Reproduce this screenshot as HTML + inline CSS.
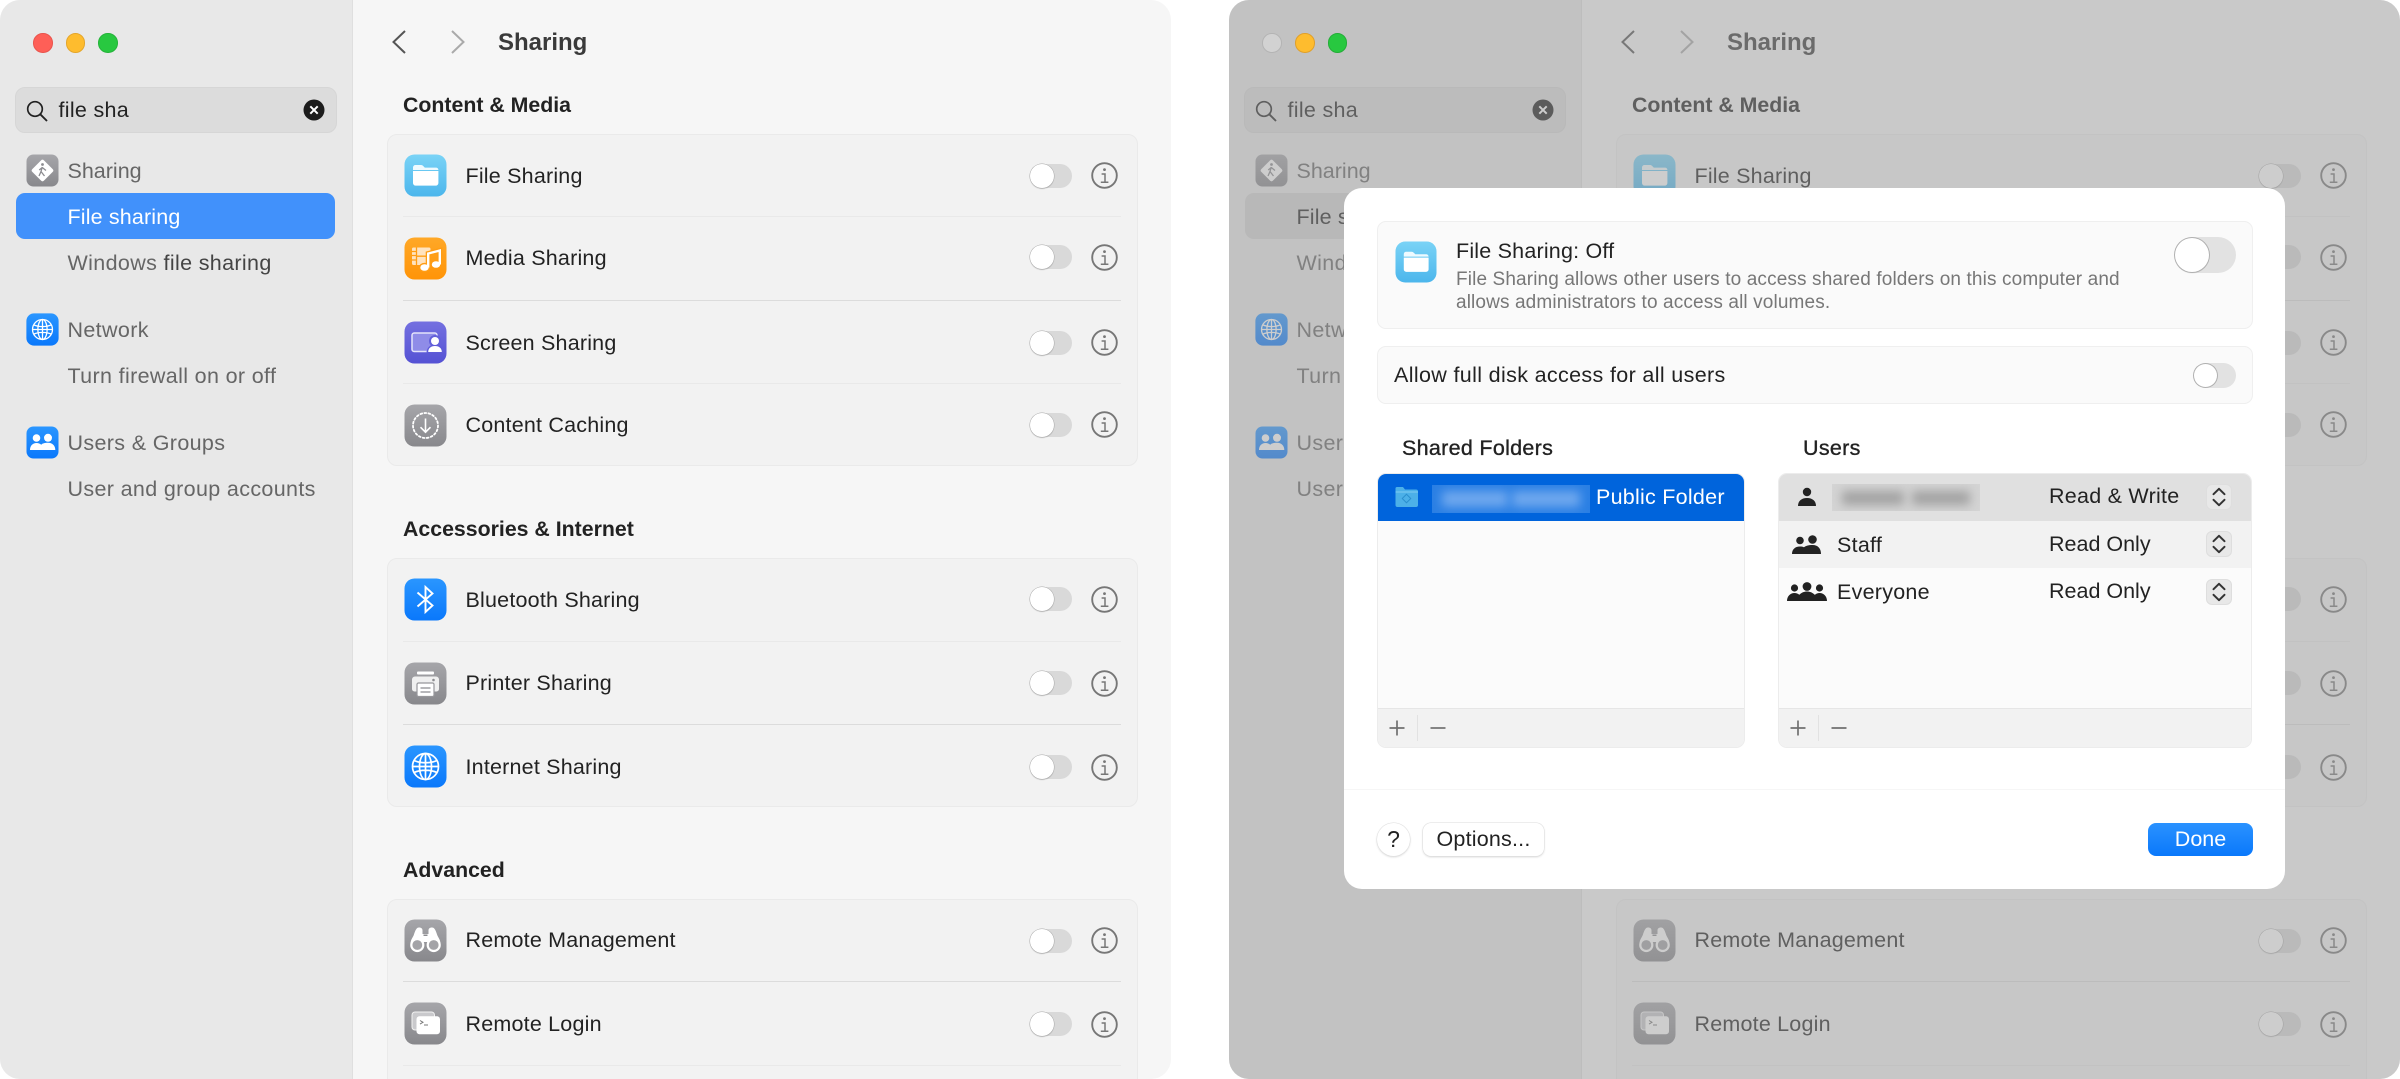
<!DOCTYPE html>
<html><head><meta charset="utf-8"><title>Sharing</title>
<style>
*{box-sizing:border-box}
html,body{margin:0;padding:0;background:#fff}
body{width:2400px;height:1079px;position:relative;overflow:hidden;font-family:"Liberation Sans",sans-serif;color:#222}
.win{position:absolute;top:0;width:1171px;height:1079px;overflow:hidden;border-radius:20px;background:#f6f6f6}
.side{position:absolute;left:0;top:0;width:353px;height:1079px;background:#e8e8e8;border-right:1px solid #dfdfdf}
.t{position:absolute;white-space:nowrap;line-height:30px;height:30px;font-size:21.5px}
.r{left:465.5px;letter-spacing:.2px}
.m{letter-spacing:.25px}
.g{color:#666;letter-spacing:.35px}
.h{font-weight:700;font-size:21.3px;color:#222}
.dot{position:absolute;top:33px;width:19.5px;height:19.5px;border-radius:50%}
.search{position:absolute;left:15px;top:87px;width:322px;height:46px;background:#dcdcdc;border:1px solid #d6d6d6;border-radius:10px}
.sel{position:absolute;left:16px;top:193px;width:319px;height:46px;border-radius:9px;background:#4191fb}
.si{position:absolute;left:26px;width:33px;height:33px}
.panel{position:absolute;left:387px;width:751px;background:#f2f2f2;border:1px solid #eaeaea;border-radius:10px}
.sep{position:absolute;left:403px;width:718px;height:1px;background:#e9e9e9}
.sep.d{background:#dcdcdc}
.ic{position:absolute;left:404px;width:43px;height:43px}
.tg{position:absolute;left:1030px;width:42px;height:24px;border-radius:12px;background:#d9d9d9}
.tg:before{content:"";position:absolute;left:0;top:0;width:24px;height:24px;border-radius:50%;background:#fff;box-shadow:0 0 0 .5px #a8a8a8,0 1px 1px rgba(0,0,0,.2)}
.inf{position:absolute;left:1091px;width:27px;height:27px}
.veil{position:absolute;left:0;top:0;width:1171px;height:1079px;background:rgba(156,156,156,.5)}
.modal{position:absolute;left:1344px;top:188px;width:941px;height:701px;background:#fff;border-radius:18px}
.box{position:absolute;background:#fafafa;border:1px solid #efefef;border-radius:9px}
.list{position:absolute;top:473px;height:275px;background:#fbfbfb;border:1px solid #ececec;border-radius:9px;overflow:hidden}
.foot{position:absolute;left:0;right:0;bottom:0;height:39px;background:#f2f2f2;border-top:1px solid #e6e6e6}
.vd{position:absolute;left:39px;top:6px;width:1px;height:26px;background:#e2e2e2}
.pm{position:absolute;top:0;width:20px;height:38px}
.st{position:absolute;left:2206px;width:26px;height:26px;border-radius:6px;background:#e8e8e8;border:1px solid #dedede}
</style></head><body>
<svg width="0" height="0" style="position:absolute">
<defs>
<linearGradient id="gBlue" x1="0" y1="0" x2="0" y2="1"><stop offset="0" stop-color="#2a96ff"/><stop offset="1" stop-color="#0a78fb"/></linearGradient>
<linearGradient id="gGray" x1="0" y1="0" x2="0" y2="1"><stop offset="0" stop-color="#a6a6aa"/><stop offset="1" stop-color="#88888c"/></linearGradient>
<linearGradient id="gFold" x1="0" y1="0" x2="0" y2="1"><stop offset="0" stop-color="#7ad3f6"/><stop offset="1" stop-color="#4cb6ec"/></linearGradient>
<linearGradient id="gOr" x1="0" y1="0" x2="0" y2="1"><stop offset="0" stop-color="#ffa827"/><stop offset="1" stop-color="#ff9408"/></linearGradient>
<linearGradient id="gPu" x1="0" y1="0" x2="0" y2="1"><stop offset="0" stop-color="#7470e0"/><stop offset="1" stop-color="#5552d4"/></linearGradient>
</defs>
<symbol id="info" viewBox="0 0 27 27"><circle cx="13.5" cy="13.5" r="12.3" fill="none" stroke="#777" stroke-width="1.9"/><circle cx="13.5" cy="7.6" r="1.4" fill="#777"/><path d="M10.6 12h3.4v8M9.8 20.3h7.6" fill="none" stroke="#777" stroke-width="1.5"/></symbol>
<symbol id="folder" viewBox="0 0 43 43"><rect x=".5" y=".5" width="42" height="42" rx="10" fill="url(#gFold)"/><path d="M9 15V13.4A2.4 2.4 0 0 1 11.4 11H17c1 0 1.6.4 2.2 1l1.6 1.6H32A2.4 2.4 0 0 1 34.4 16H9z" fill="#eefaff"/><path d="M9 17H34.4V29A2.6 2.6 0 0 1 31.8 31.6H11.6A2.6 2.6 0 0 1 9 29z" fill="#fff"/></symbol>
<symbol id="media" viewBox="0 0 43 43"><rect x=".5" y=".5" width="42" height="42" rx="10" fill="url(#gOr)"/><rect x="8" y="10.5" width="18.500" height="17.500" rx="1.500" fill="#ffe3bf"/><path d="M12.500 10.500V28M8 14.500h4.500M8 18.500h4.500M8 23h4.500M12.500 19.200H26.500" stroke="#ff9d14" stroke-width="1.300"/><g fill="none" stroke="#ff9d14" stroke-width="5"><path d="M24.200 30V16.500L35.800 13.500V27"/></g><ellipse cx="20.500" cy="30.500" rx="5.500" ry="4.700" fill="#ff9d14"/><path d="M24.200 30.500V16.500L35.800 13.500V27.500" fill="none" stroke="#fff" stroke-width="2.400"/><ellipse cx="20.500" cy="30.500" rx="4.200" ry="3.300" fill="#fff"/><ellipse cx="32" cy="27.500" rx="4.200" ry="3.300" fill="#fff"/></symbol>
<symbol id="screen" viewBox="0 0 43 43"><rect x=".5" y=".5" width="42" height="42" rx="10" fill="url(#gPu)"/><rect x="8" y="12" width="25" height="18.500" rx="2.200" fill="#8f8ce8" stroke="#e4e3fa" stroke-width="1.500"/><circle cx="31" cy="20" r="6" fill="#6360da"/><path d="M22.500 32c0-5 3.500-8.500 8.500-8.500s8.500 3.500 8.500 8.500z" fill="#5f5cd8"/><circle cx="31" cy="20" r="4" fill="#fff"/><path d="M24.200 31c0-3.800 2.800-6 6.800-6s6.800 2.200 6.800 6z" fill="#fff"/></symbol>
<symbol id="cache" viewBox="0 0 43 43"><rect x=".5" y=".5" width="42" height="42" rx="10" fill="url(#gGray)"/><circle cx="21.500" cy="21.500" r="12.500" fill="none" stroke="#fff" stroke-width="1.800" stroke-dasharray="1.800 2.300" stroke-linecap="round"/><path d="M21.500 14.500V28M16.500 23.200l5 5 5-5" fill="none" stroke="#fff" stroke-width="1.600"/></symbol>
<symbol id="bt" viewBox="0 0 43 43"><rect x=".5" y=".5" width="42" height="42" rx="10" fill="url(#gBlue)"/><path d="M13.500 14.500L28.500 27.500 21.500 34V9L28.500 15.500 13.500 28.500" fill="none" stroke="#fff" stroke-width="1.900"/></symbol>
<symbol id="printer" viewBox="0 0 43 43"><rect x=".5" y=".5" width="42" height="42" rx="10" fill="url(#gGray)"/><rect x="13" y="9.500" width="17" height="3" rx="1" fill="#fff"/><path d="M11 14.500H32A3 3 0 0 1 35 17.500V27A2.500 2.500 0 0 1 32.500 29.500H10.500A2.500 2.500 0 0 1 8 27V17.500A3 3 0 0 1 11 14.500z" fill="#f0f0f0"/><circle cx="29.500" cy="18" r="1.300" fill="#8c8c90"/><rect x="13" y="21" width="17" height="13.500" rx="1.500" fill="#fff" stroke="#97979b" stroke-width="1.200"/><path d="M16.500 26H26.500M16.500 30H26.500" stroke="#8c8c90" stroke-width="1.300"/></symbol>
<symbol id="globe" viewBox="0 0 43 43"><rect x=".5" y=".5" width="42" height="42" rx="10" fill="url(#gBlue)"/><g fill="none" stroke="#fff" stroke-width="1.700"><circle cx="21.500" cy="21.500" r="13"/><ellipse cx="21.500" cy="21.500" rx="6" ry="13"/><path d="M21.500 8.500V34.500M10 15.500C17 18.500 26 18.500 33 15.500M8.500 21.500H34.500M10 27.500C17 24.500 26 24.500 33 27.500"/></g></symbol>
<symbol id="binoc" viewBox="0 0 43 43"><rect x=".5" y=".5" width="42" height="42" rx="10" fill="url(#gGray)"/><path d="M15 8.500c2.500 0 3.500 1.200 3.500 3V25H6.500C6.500 21 8.500 19 9.800 16 11 12.500 12 8.500 15 8.500zM28 8.500c-2.500 0-3.500 1.200-3.500 3V25H36.500C36.500 21 34.500 19 33.200 16 32 12.500 31 8.500 28 8.500z" fill="#fff"/><rect x="18" y="15" width="7" height="8" fill="#fff"/><rect x="19.500" y="15.500" width="4" height="1.500" fill="#8c8c90"/><circle cx="13.300" cy="26" r="6" fill="#a3a3a7" stroke="#fff" stroke-width="2.200"/><circle cx="29.700" cy="26" r="6" fill="#a3a3a7" stroke="#fff" stroke-width="2.200"/></symbol>
<symbol id="term" viewBox="0 0 43 43"><rect x=".5" y=".5" width="42" height="42" rx="10" fill="url(#gGray)"/><rect x="8" y="10" width="22.500" height="18" rx="3" fill="#c9c9cc" stroke="#f2f2f2" stroke-width="1"/><rect x="12.500" y="14.300" width="23.500" height="18" rx="3" fill="#fff"/><path d="M16 18.500l3 1.800-3 1.800M20 23H24" fill="none" stroke="#777" stroke-width="1"/></symbol>
<symbol id="walk" viewBox="0 0 33 33"><rect x=".5" y=".5" width="32" height="32" rx="7" fill="url(#gGray)"/><rect x="8.300" y="8.300" width="16.400" height="16.400" rx="2" transform="rotate(45 16.500 16.500)" fill="#fff"/><circle cx="16.500" cy="10.500" r="1.400" fill="#8c8c90"/><path d="M16.300 13L15 17.500 13 22M15 17.500L18.500 22M16.300 13.500L20 16.500M16.300 13.500L13.200 16" fill="none" stroke="#8c8c90" stroke-width="1.300"/></symbol>
<symbol id="users" viewBox="0 0 33 33"><rect x=".5" y=".5" width="32" height="32" rx="7" fill="url(#gBlue)"/><circle cx="10.500" cy="12" r="3.800" fill="#fff"/><circle cx="22" cy="11.800" r="4" fill="#fff"/><path d="M4 24c0-4.300 2.800-7 6.500-7 2 0 3.600.6 4.700 1.800C16.500 17.300 19 16.800 22 16.800c4.300 0 7.300 2.800 7.300 7.200z" fill="#fff"/></symbol>
<symbol id="chev" viewBox="0 0 26 26"><path d="M7.500 10.200L13 4.800l5.500 5.400M7.500 15.800L13 21.200l5.500-5.400" fill="none" stroke="#333" stroke-width="2" stroke-linecap="round" stroke-linejoin="round"/></symbol>
<symbol id="plus" viewBox="0 0 20 38"><path d="M10 11.500V26.500M2.500 19H17.500" stroke="#707070" stroke-width="1.700"/></symbol>
<symbol id="minus" viewBox="0 0 20 38"><path d="M2.500 19H17.500" stroke="#707070" stroke-width="1.700"/></symbol>
</svg>

<!-- LEFT WINDOW -->
<div class="win" style="left:0">
<div class="side"></div>
<div class="dot" style="left:33px;background:#fe5f57;border:1px solid #e9544d"></div>
<div class="dot" style="left:65.5px;background:#febc2e;border:1px solid #e4a62b"></div>
<div class="dot" style="left:98px;background:#28c840;border:1px solid #25b33a"></div>
<div class="search"></div>
<svg style="position:absolute;left:26px;top:100px" width="22" height="22" viewBox="0 0 22 22"><circle cx="9" cy="9" r="7.3" fill="none" stroke="#222" stroke-width="1.7"/><path d="M14.3 14.300L21 21" stroke="#222" stroke-width="1.900"/></svg>
<div class="t" style="left:58.500px;top:95px;letter-spacing:.3px;color:#222">file sha</div>
<svg style="position:absolute;left:303px;top:99px" width="22" height="22" viewBox="0 0 22 22"><circle cx="11" cy="11" r="10.500" fill="#1c1c1c"/><path d="M7.300 7.300L14.700 14.700M14.700 7.300L7.300 14.700" stroke="#fff" stroke-width="2"/></svg>
<svg class="si" style="top:154px"><use href="#walk"/></svg>
<div class="t g" style="left:67.500px;top:156px;letter-spacing:0">Sharing</div>
<div class="sel"></div>
<div class="t" style="left:67.500px;top:202px;color:#fff;letter-spacing:.15px">File sharing</div>
<div class="t g" style="left:67.500px;top:248px">Windows <span style="color:#444">file sharing</span></div>
<svg class="si" style="top:313px"><use href="#globe"/></svg>
<div class="t g" style="left:67.500px;top:315px">Network</div>
<div class="t g" style="left:67.500px;top:361px">Turn firewall on or off</div>
<svg class="si" style="top:426px"><use href="#users"/></svg>
<div class="t g" style="left:67.500px;top:428px">Users &amp; Groups</div>
<div class="t g" style="left:67.500px;top:474px">User and group accounts</div>

<svg style="position:absolute;left:392px;top:30px" width="14" height="24" viewBox="0 0 14 24"><path d="M13 1L1.500 12 13 23" fill="none" stroke="#555" stroke-width="2"/></svg>
<svg style="position:absolute;left:451px;top:30px" width="14" height="24" viewBox="0 0 14 24"><path d="M1 1L12.500 12 1 23" fill="none" stroke="#aaa" stroke-width="2"/></svg>
<div class="t" style="left:498px;top:28px;font-weight:700;font-size:24px;color:#3a3a3a">Sharing</div>

<div class="t h" style="left:403px;top:90px">Content &amp; Media</div>
<div class="panel" style="top:134px;height:332px"></div>
<svg class="ic" style="top:154px"><use href="#folder"/></svg><div class="t r" style="top:161px">File Sharing</div><i class="tg" style="top:164px"></i><svg class="inf" style="top:162px"><use href="#info"/></svg>
<div class="sep" style="top:216px"></div>
<svg class="ic" style="top:237px"><use href="#media"/></svg><div class="t r" style="top:243px">Media Sharing</div><i class="tg" style="top:245px"></i><svg class="inf" style="top:244px"><use href="#info"/></svg>
<div class="sep d" style="top:300px"></div>
<svg class="ic" style="top:321px"><use href="#screen"/></svg><div class="t r" style="top:328px">Screen Sharing</div><i class="tg" style="top:331px"></i><svg class="inf" style="top:329px"><use href="#info"/></svg>
<div class="sep" style="top:383px"></div>
<svg class="ic" style="top:404px"><use href="#cache"/></svg><div class="t r" style="top:410px">Content Caching</div><i class="tg" style="top:413px"></i><svg class="inf" style="top:411px"><use href="#info"/></svg>

<div class="t h" style="left:403px;top:514px">Accessories &amp; Internet</div>
<div class="panel" style="top:558px;height:249px"></div>
<svg class="ic" style="top:578px"><use href="#bt"/></svg><div class="t r" style="top:585px">Bluetooth Sharing</div><i class="tg" style="top:587px"></i><svg class="inf" style="top:586px"><use href="#info"/></svg>
<div class="sep" style="top:641px"></div>
<svg class="ic" style="top:662px"><use href="#printer"/></svg><div class="t r" style="top:668px">Printer Sharing</div><i class="tg" style="top:671px"></i><svg class="inf" style="top:670px"><use href="#info"/></svg>
<div class="sep d" style="top:724px"></div>
<svg class="ic" style="top:745px"><use href="#globe"/></svg><div class="t r" style="top:752px">Internet Sharing</div><i class="tg" style="top:755px"></i><svg class="inf" style="top:754px"><use href="#info"/></svg>

<div class="t h" style="left:403px;top:855px">Advanced</div>
<div class="panel" style="top:899px;height:220px"></div>
<svg class="ic" style="top:919px"><use href="#binoc"/></svg><div class="t r" style="top:925px">Remote Management</div><i class="tg" style="top:929px"></i><svg class="inf" style="top:927px"><use href="#info"/></svg>
<div class="sep d" style="top:981px"></div>
<svg class="ic" style="top:1002px"><use href="#term"/></svg><div class="t r" style="top:1009px">Remote Login</div><i class="tg" style="top:1012px"></i><svg class="inf" style="top:1011px"><use href="#info"/></svg>
<div class="sep" style="top:1065px"></div>
</div>

<!-- RIGHT WINDOW (dimmed) -->
<div class="win" style="left:1229px">
<div class="side"></div>
<div class="search"></div>
<svg style="position:absolute;left:26px;top:100px" width="22" height="22" viewBox="0 0 22 22"><circle cx="9" cy="9" r="7.300" fill="none" stroke="#222" stroke-width="1.700"/><path d="M14.300 14.300L21 21" stroke="#222" stroke-width="1.900"/></svg>
<div class="t" style="left:58.500px;top:95px;letter-spacing:.3px;color:#222">file sha</div>
<svg style="position:absolute;left:303px;top:99px" width="22" height="22" viewBox="0 0 22 22"><circle cx="11" cy="11" r="10.500" fill="#1c1c1c"/><path d="M7.300 7.300L14.700 14.700M14.700 7.300L7.300 14.700" stroke="#fff" stroke-width="2"/></svg>
<svg class="si" style="top:154px"><use href="#walk"/></svg>
<div class="t g" style="left:67.500px;top:156px;letter-spacing:0">Sharing</div>
<div class="sel" style="background:#d4d4d4"></div>
<div class="t" style="left:67.500px;top:202px;color:#222;letter-spacing:.15px">File sharing</div>
<div class="t g" style="left:67.500px;top:248px">Windows <span style="color:#444">file sharing</span></div>
<svg class="si" style="top:313px"><use href="#globe"/></svg>
<div class="t g" style="left:67.500px;top:315px">Network</div>
<div class="t g" style="left:67.500px;top:361px">Turn firewall on or off</div>
<svg class="si" style="top:426px"><use href="#users"/></svg>
<div class="t g" style="left:67.500px;top:428px">Users &amp; Groups</div>
<div class="t g" style="left:67.500px;top:474px">User and group accounts</div>

<svg style="position:absolute;left:392px;top:30px" width="14" height="24" viewBox="0 0 14 24"><path d="M13 1L1.500 12 13 23" fill="none" stroke="#555" stroke-width="2"/></svg>
<svg style="position:absolute;left:451px;top:30px" width="14" height="24" viewBox="0 0 14 24"><path d="M1 1L12.500 12 1 23" fill="none" stroke="#aaa" stroke-width="2"/></svg>
<div class="t" style="left:498px;top:28px;font-weight:700;font-size:24px;color:#3a3a3a">Sharing</div>

<div class="t h" style="left:403px;top:90px">Content &amp; Media</div>
<div class="panel" style="top:134px;height:332px"></div>
<svg class="ic" style="top:154px"><use href="#folder"/></svg><div class="t r" style="top:161px">File Sharing</div><i class="tg" style="top:164px"></i><svg class="inf" style="top:162px"><use href="#info"/></svg>
<div class="sep" style="top:216px"></div>
<i class="tg" style="top:245px"></i><svg class="inf" style="top:244px"><use href="#info"/></svg>
<div class="sep d" style="top:300px"></div>
<i class="tg" style="top:331px"></i><svg class="inf" style="top:329px"><use href="#info"/></svg>
<div class="sep" style="top:383px"></div>
<i class="tg" style="top:413px"></i><svg class="inf" style="top:411px"><use href="#info"/></svg>
<div class="panel" style="top:558px;height:249px"></div>
<i class="tg" style="top:587px"></i><svg class="inf" style="top:586px"><use href="#info"/></svg>
<div class="sep" style="top:641px"></div>
<i class="tg" style="top:671px"></i><svg class="inf" style="top:670px"><use href="#info"/></svg>
<div class="sep d" style="top:724px"></div>
<i class="tg" style="top:755px"></i><svg class="inf" style="top:754px"><use href="#info"/></svg>
<div class="panel" style="top:899px;height:220px"></div>
<svg class="ic" style="top:919px"><use href="#binoc"/></svg><div class="t r" style="top:925px">Remote Management</div><i class="tg" style="top:929px"></i><svg class="inf" style="top:927px"><use href="#info"/></svg>
<div class="sep d" style="top:981px"></div>
<svg class="ic" style="top:1002px"><use href="#term"/></svg><div class="t r" style="top:1009px">Remote Login</div><i class="tg" style="top:1012px"></i><svg class="inf" style="top:1011px"><use href="#info"/></svg>
<div class="sep" style="top:1065px"></div>
<div class="veil"></div>
<div class="dot" style="left:33px;background:#d2d2d2;border:1px solid #b4b4b4"></div>
<div class="dot" style="left:66px;background:#febc2e;border:1px solid #e0a02a"></div>
<div class="dot" style="left:98.5px;background:#28c840;border:1px solid #24ad38"></div>
</div>

<!-- MODAL -->
<div class="modal"></div>
<div class="box" style="left:1377px;top:221px;width:876px;height:108px"></div>
<svg style="position:absolute;left:1395px;top:241px;width:42px;height:42px"><use href="#folder"/></svg>
<div class="t" style="left:1456px;top:236px;letter-spacing:.2px">File Sharing: Off</div>
<div class="t" style="left:1456px;top:265px;font-size:19px;letter-spacing:.13px;color:#777">File Sharing allows other users to access shared folders on this computer and</div>
<div class="t" style="left:1456px;top:288px;font-size:19px;letter-spacing:.13px;color:#777">allows administrators to access all volumes.</div>
<div style="position:absolute;left:2175px;top:237px;width:61px;height:36px;border-radius:18px;background:#e2e2e2"></div>
<div style="position:absolute;left:2175px;top:238px;width:34px;height:34px;border-radius:50%;background:#fff;box-shadow:0 0 0 1px #b0b0b0,0 1px 1px rgba(0,0,0,.2)"></div>
<div class="box" style="left:1377px;top:346px;width:876px;height:58px"></div>
<div class="t" style="left:1394px;top:360px;letter-spacing:.35px">Allow full disk access for all users</div>
<div style="position:absolute;left:2194px;top:363px;width:42px;height:25px;border-radius:13px;background:#e2e2e2"></div>
<div style="position:absolute;left:2194px;top:364px;width:23px;height:23px;border-radius:50%;background:#fff;box-shadow:0 0 0 1px #b0b0b0"></div>

<div class="t" style="left:1402px;top:433px;letter-spacing:.3px;-webkit-text-stroke:.35px #222">Shared Folders</div>
<div class="t" style="left:1803px;top:433px;letter-spacing:.3px;-webkit-text-stroke:.35px #222">Users</div>

<div class="list" style="left:1377px;width:368px">
<div style="position:absolute;left:-1px;top:-1px;width:368px;height:48px;background:#0064dc"></div>
<div class="foot"><div class="vd"></div><svg class="pm" style="left:9px"><use href="#plus"/></svg><svg class="pm" style="left:50px"><use href="#minus"/></svg></div>
</div>
<svg style="position:absolute;left:1394px;top:485px" width="25" height="24" viewBox="0 0 25 24"><path d="M1.500 3.500A1.500 1.500 0 0 1 3 2H9l2 2.500H22A2 2 0 0 1 24 6.500V20A2 2 0 0 1 22 22H3.500A2 2 0 0 1 1.500 20z" fill="#4cb0e8"/><path d="M1.500 7H24" stroke="#7fcdf2" stroke-width="1"/><rect x="9.500" y="10.500" width="6" height="6" transform="rotate(45 12.500 13.500)" fill="none" stroke="#2b8fce" stroke-width="1"/></svg>
<div style="position:absolute;left:1432px;top:485px;width:158px;height:28px;background:#2a7fe4;overflow:hidden"><div style="position:absolute;left:10px;top:6px;width:66px;height:16px;background:#6fa8ee;filter:blur(5px)"></div><div style="position:absolute;left:80px;top:6px;width:68px;height:16px;background:#6fa8ee;filter:blur(5px)"></div></div>
<div class="t m" style="left:1596px;top:482px;color:#fff">Public Folder</div>

<div class="list" style="left:1778px;width:474px">
<div style="position:absolute;left:-1px;top:-1px;width:474px;height:48px;background:#e0e0e0"></div>
<div style="position:absolute;left:-1px;top:47px;width:474px;height:47px;background:#f2f2f2"></div>
<div class="foot"><div class="vd"></div><svg class="pm" style="left:9px"><use href="#plus"/></svg><svg class="pm" style="left:50px"><use href="#minus"/></svg></div>
</div>
<svg style="position:absolute;left:1797px;top:487px" width="20" height="20" viewBox="0 0 20 20"><circle cx="10" cy="5" r="4.200" fill="#222"/><path d="M1 19c0-5 3.500-8 9-8s9 3 9 8z" fill="#222"/></svg>
<div style="position:absolute;left:1832px;top:484px;width:148px;height:27px;background:#d4d4d4;overflow:hidden"><div style="position:absolute;left:10px;top:7px;width:62px;height:14px;background:#a2a2a2;filter:blur(5px)"></div><div style="position:absolute;left:80px;top:7px;width:58px;height:14px;background:#a2a2a2;filter:blur(5px)"></div></div>
<svg style="position:absolute;left:1792px;top:535px" width="30" height="20" viewBox="0 0 30 20"><circle cx="8" cy="5.500" r="3.800" fill="#222"/><circle cx="20.500" cy="4.500" r="4.300" fill="#222"/><path d="M0 19c0-4.500 3-7.500 8-7.500 1.500 0 2.800.2 3.900.8C13.500 11 16.500 10 20.500 10c5.500 0 8.500 3.500 8.500 9z" fill="#222"/></svg>
<svg style="position:absolute;left:1787px;top:582px" width="40" height="20" viewBox="0 0 40 20"><circle cx="7.500" cy="6" r="3.600" fill="#222"/><circle cx="20" cy="4.500" r="4.400" fill="#222"/><circle cx="32.500" cy="6" r="3.600" fill="#222"/><path d="M0 19c0-4.500 3-8 7.500-8 2 0 3.500.6 4.700 1.800L28 12.800c1.200-1.200 2.700-1.800 4.500-1.800C37 11 40 14.500 40 19z" fill="#222"/><path d="M10 19c0-5 4-9.500 10-9.500S30 14 30 19z" fill="#222"/></svg>
<div class="t m" style="left:1837px;top:530px">Staff</div>
<div class="t m" style="left:1837px;top:577px">Everyone</div>
<div class="t m" style="left:2049px;top:481px">Read &amp; Write</div>
<div class="t" style="left:2049px;top:529px">Read Only</div>
<div class="t" style="left:2049px;top:576px">Read Only</div>
<div class="st" style="top:484px"><svg width="24" height="24" viewBox="1 1 24 24" style="display:block"><use href="#chev" width="26" height="26"/></svg></div>
<div class="st" style="top:531px"><svg width="24" height="24" viewBox="1 1 24 24" style="display:block"><use href="#chev" width="26" height="26"/></svg></div>
<div class="st" style="top:579px"><svg width="24" height="24" viewBox="1 1 24 24" style="display:block"><use href="#chev" width="26" height="26"/></svg></div>

<div style="position:absolute;left:1344px;top:789px;width:941px;height:1px;background:#f6f6f6"></div>
<div style="position:absolute;left:1377px;top:823px;width:33px;height:33px;border-radius:50%;background:#fff;box-shadow:0 0 0 .5px #ddd,0 1px 2px rgba(0,0,0,.18);text-align:center;font-size:23px;line-height:33px;color:#222">?</div>
<div style="position:absolute;left:1423px;top:823px;width:121px;height:33px;border-radius:8px;background:#fff;box-shadow:0 0 0 .5px #ddd,0 1px 2px rgba(0,0,0,.18);text-align:center;font-size:21.5px;line-height:32px;letter-spacing:.2px;color:#222">Options...</div>
<div style="position:absolute;left:2148px;top:823px;width:105px;height:33px;border-radius:8px;background:linear-gradient(#2a92ff,#0a78fb);text-align:center;font-size:21.5px;line-height:33px;color:#fff">Done</div>
</body></html>
